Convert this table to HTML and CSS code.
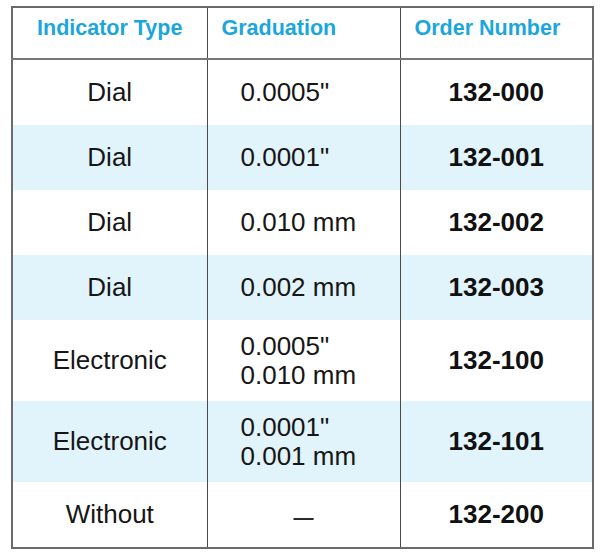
FILE: index.html
```html
<!DOCTYPE html>
<html lang="en">
<head>
<meta charset="utf-8">
<title>Indicator Order Numbers</title>
<link rel="stylesheet" href="styles.css">
</head>
<body>
<table class="spec">
  <thead>
    <tr>
      <th class="c-type">Indicator Type</th>
      <th class="c-grad">Graduation</th>
      <th class="c-num">Order Number</th>
    </tr>
  </thead>
  <tbody>
    <tr class="single">
      <td class="c-type">Dial</td>
      <td class="c-grad">0.0005"</td>
      <td class="c-num">132-000</td>
    </tr>
    <tr class="single alt">
      <td class="c-type">Dial</td>
      <td class="c-grad">0.0001"</td>
      <td class="c-num">132-001</td>
    </tr>
    <tr class="single">
      <td class="c-type">Dial</td>
      <td class="c-grad">0.010 mm</td>
      <td class="c-num">132-002</td>
    </tr>
    <tr class="single alt">
      <td class="c-type">Dial</td>
      <td class="c-grad">0.002 mm</td>
      <td class="c-num">132-003</td>
    </tr>
    <tr class="double">
      <td class="c-type">Electronic</td>
      <td class="c-grad">0.0005"<br>0.010 mm</td>
      <td class="c-num">132-100</td>
    </tr>
    <tr class="double alt">
      <td class="c-type">Electronic</td>
      <td class="c-grad">0.0001"<br>0.001 mm</td>
      <td class="c-num">132-101</td>
    </tr>
    <tr class="single last">
      <td class="c-type">Without</td>
      <td class="c-grad dash-cell"><span class="dash">—</span></td>
      <td class="c-num">132-200</td>
    </tr>
  </tbody>
</table>
</body>
</html>
```

FILE: styles.css
```css
html, body {
  margin: 0;
  padding: 0;
  background: #ffffff;
}

body {
  font-family: "Liberation Sans", Arial, Helvetica, sans-serif;
  color: #161616;
}

.spec {
  border-collapse: collapse;
  width: 583px;
  margin: 6px 0 0 11px;
  border: 2px solid #6a6a6a;
  table-layout: fixed;
}

.spec th,
.spec td {
  padding: 0;
  border-left: 1px solid #4a4a4a;
}

.spec th.c-type,
.spec td.c-type {
  width: 195px;
  border-left: none;
}

.spec th.c-grad,
.spec td.c-grad {
  width: 193px;
}

.spec th {
  height: 52px;
  padding-bottom: 9px;
  box-sizing: border-box;
  border-bottom: 2px solid #777777;
  color: #1ba6dd;
  font-size: 21.5px;
  font-weight: 700;
  vertical-align: middle;
}

.spec th.c-type {
  text-align: center;
}

.spec th.c-grad,
.spec th.c-num {
  text-align: left;
  padding-left: 14px;
}

.spec td {
  font-size: 26px;
  vertical-align: middle;
  line-height: 29px;
}

.spec tr.single td {
  height: 65px;
}

.spec tr.double td {
  height: 81px;
}

.spec tr.alt td {
  background: #e1f3fb;
}

.spec td.c-type {
  text-align: center;
}

.spec td.c-grad {
  text-align: left;
  padding-left: 33px;
}

.spec td.dash-cell {
  text-align: center;
  padding-left: 0;
}

.dash {
  font-size: 20px;
  font-weight: 700;
  color: #2a2a2a;
  vertical-align: -3px;
}

.spec td.c-num {
  text-align: center;
  font-weight: 700;
  color: #111111;
}
```
